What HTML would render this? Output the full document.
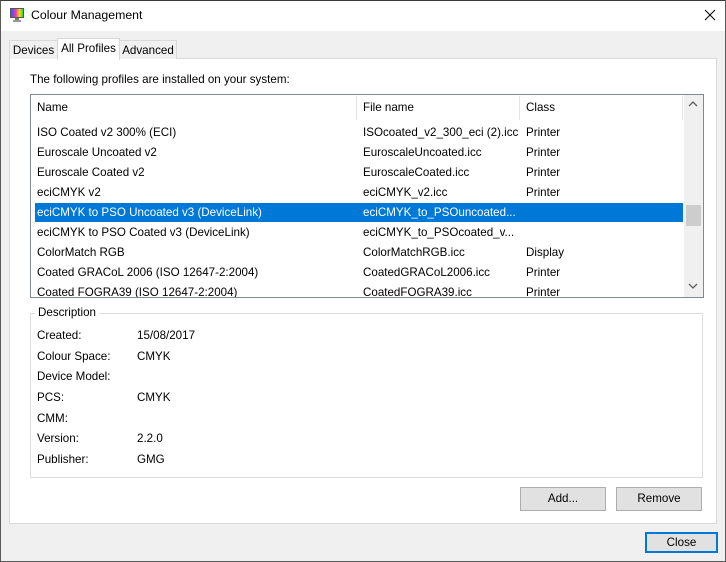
<!DOCTYPE html>
<html><head><meta charset="utf-8"><style>
*{margin:0;padding:0;box-sizing:border-box}
body{width:726px;height:562px;background:#f0f0f0;font-family:"Liberation Sans",sans-serif;font-size:11.6px;color:#000;position:relative;overflow:hidden}
.a{position:absolute;white-space:nowrap}
.btn{position:absolute;background:#e1e1e1;border:1px solid #adadad;text-align:center;line-height:22px}
.row{position:absolute;left:35px;width:648px;height:20px;line-height:20px}
.row span{position:absolute}
</style></head><body>
<div class="a" style="left:0;top:0;width:726px;height:562px;border:1px solid #5a5a5a;border-top:1px solid #3b3b3b"></div>
<div class="a" style="left:1px;top:1px;width:724px;height:30px;background:#fff"></div>
<svg class="a" style="left:9px;top:7px" width="16" height="16" viewBox="0 0 16 16"><rect x="1" y="1" width="14" height="10" fill="#555"/><rect x="2" y="2" width="12" height="8" fill="url(#g)"/><defs><linearGradient id="g" x1="0" x2="1"><stop offset="0" stop-color="#2060ff"/><stop offset=".4" stop-color="#ff30c0"/><stop offset=".7" stop-color="#ffe000"/><stop offset="1" stop-color="#30d040"/></linearGradient></defs><rect x="6" y="11" width="4" height="2" fill="#777"/><rect x="4" y="13" width="8" height="2" fill="#999"/></svg>
<div class="a" style="left:31px;top:8px;font-size:12.3px">Colour Management</div>
<svg class="a" style="left:704px;top:9px" width="12" height="12"><path d="M1 1L11 11M11 1L1 11" stroke="#000" stroke-width="1"/></svg>

<div class="a" style="left:9px;top:58px;width:708px;height:466px;background:#fff;border:1px solid #d9d9d9"></div>
<div class="a" style="left:9px;top:40px;width:49px;height:19px;border:1px solid #d9d9d9;border-bottom:none;background:#f0f0f0;text-align:center;line-height:19px">Devices</div>
<div class="a" style="left:119px;top:40px;width:58px;height:19px;border:1px solid #d9d9d9;border-bottom:none;background:#f0f0f0;text-align:center;line-height:19px">Advanced</div>
<div class="a" style="left:57px;top:38px;width:63px;height:22px;border:1px solid #d9d9d9;border-bottom:none;background:#fff;text-align:center;line-height:19px">All Profiles</div>

<div class="a" style="left:30px;top:73px">The following profiles are installed on your system:</div>

<div class="a" style="left:30px;top:94px;width:674px;height:204px;border:1px solid #828790;background:#fff"></div>
<div class="a" style="left:37px;top:101px">Name</div>
<div class="a" style="left:356px;top:96px;width:1px;height:24px;background:#e5e5e5"></div>
<div class="a" style="left:363px;top:101px">File name</div>
<div class="a" style="left:519px;top:96px;width:1px;height:24px;background:#e5e5e5"></div>
<div class="a" style="left:526px;top:101px">Class</div>
<div class="a" style="left:682px;top:96px;width:1px;height:24px;background:#e5e5e5"></div>
<div class="a" style="left:684px;top:95px;width:19px;height:202px;background:#f0f0f0"></div>
<svg class="a" style="left:688px;top:100px" width="10" height="8"><path d="M1 6L5 2L9 6" stroke="#606060" fill="none" stroke-width="1.3"/></svg>
<svg class="a" style="left:688px;top:282px" width="10" height="8"><path d="M1 2L5 6L9 2" stroke="#606060" fill="none" stroke-width="1.3"/></svg>
<div class="a" style="left:686px;top:205px;width:15px;height:21px;background:#cdcdcd"></div>

<div class="a" style="left:31px;top:122px;width:653px;height:175px;overflow:hidden">
<div class="row" style="left:4px;top:1px"><span style="left:2px">ISO Coated v2 300% (ECI)</span><span style="left:328px">ISOcoated_v2_300_eci (2).icc</span><span style="left:491px">Printer</span></div>
<div class="row" style="left:4px;top:21px"><span style="left:2px">Euroscale Uncoated v2</span><span style="left:328px">EuroscaleUncoated.icc</span><span style="left:491px">Printer</span></div>
<div class="row" style="left:4px;top:41px"><span style="left:2px">Euroscale Coated v2</span><span style="left:328px">EuroscaleCoated.icc</span><span style="left:491px">Printer</span></div>
<div class="row" style="left:4px;top:61px"><span style="left:2px">eciCMYK v2</span><span style="left:328px">eciCMYK_v2.icc</span><span style="left:491px">Printer</span></div>
<div class="row" style="left:4px;top:81px;height:19px;background:#0078d7;color:#fff;line-height:20px"><span style="left:2px">eciCMYK to PSO Uncoated v3 (DeviceLink)</span><span style="left:328px">eciCMYK_to_PSOuncoated...</span></div>
<div class="row" style="left:4px;top:101px"><span style="left:2px">eciCMYK to PSO Coated v3 (DeviceLink)</span><span style="left:328px">eciCMYK_to_PSOcoated_v...</span></div>
<div class="row" style="left:4px;top:121px"><span style="left:2px">ColorMatch RGB</span><span style="left:328px">ColorMatchRGB.icc</span><span style="left:491px">Display</span></div>
<div class="row" style="left:4px;top:141px"><span style="left:2px">Coated GRACoL 2006 (ISO 12647-2:2004)</span><span style="left:328px">CoatedGRACoL2006.icc</span><span style="left:491px">Printer</span></div>
<div class="row" style="left:4px;top:161px"><span style="left:2px">Coated FOGRA39 (ISO 12647-2:2004)</span><span style="left:328px">CoatedFOGRA39.icc</span><span style="left:491px">Printer</span></div>
</div>

<div class="a" style="left:30px;top:313px;width:673px;height:165px;border:1px solid #dcdcdc"></div>
<div class="a" style="left:35px;top:306px;background:#fff;padding:0 3px">Description</div>
<div class="a" style="left:37px;top:329px">Created:</div><div class="a" style="left:137px;top:329px">15/08/2017</div>
<div class="a" style="left:37px;top:350px">Colour Space:</div><div class="a" style="left:137px;top:350px">CMYK</div>
<div class="a" style="left:37px;top:370px">Device Model:</div>
<div class="a" style="left:37px;top:391px">PCS:</div><div class="a" style="left:137px;top:391px">CMYK</div>
<div class="a" style="left:37px;top:412px">CMM:</div>
<div class="a" style="left:37px;top:432px">Version:</div><div class="a" style="left:137px;top:432px">2.2.0</div>
<div class="a" style="left:37px;top:453px">Publisher:</div><div class="a" style="left:137px;top:453px">GMG</div>

<div class="btn" style="left:520px;top:487px;width:86px;height:24px">Add...</div>
<div class="btn" style="left:616px;top:487px;width:86px;height:24px">Remove</div>
<div class="btn" style="left:645px;top:532px;width:73px;height:21px;border:2px solid #0078d7;line-height:17px">Close</div>
</body></html>
